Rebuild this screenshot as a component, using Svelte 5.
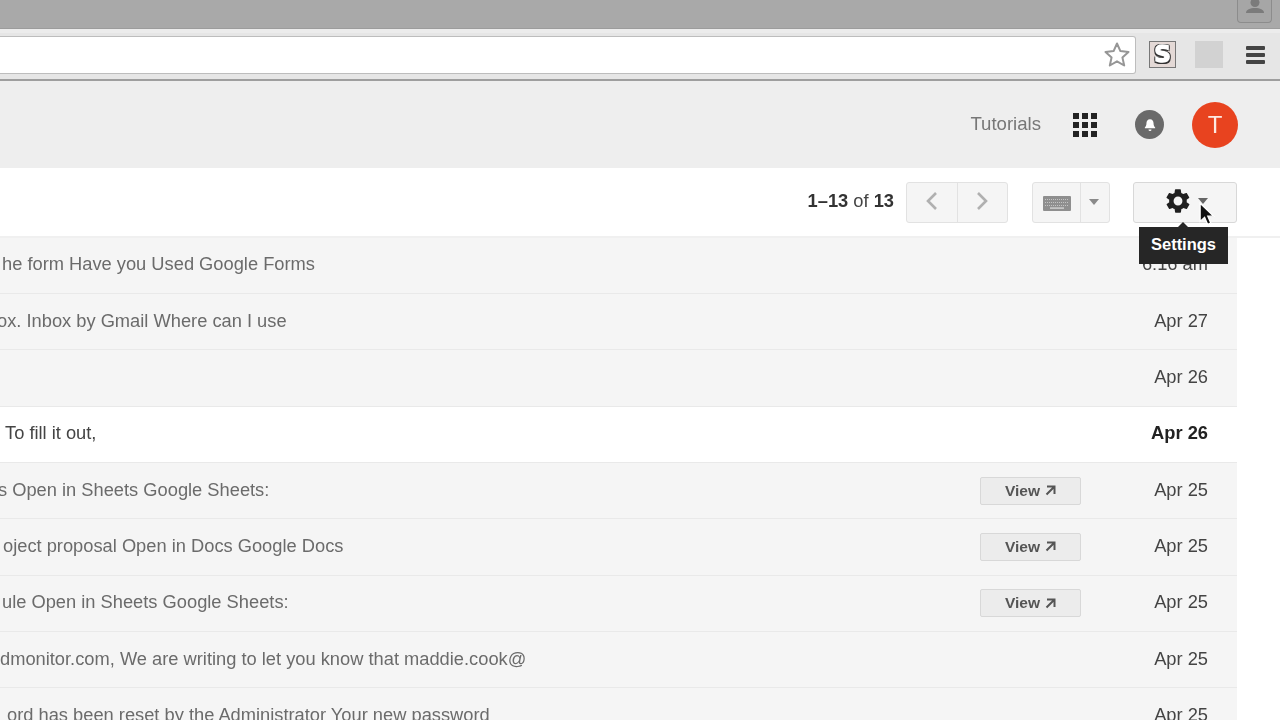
<script>
  const rows = [
    { text: 'he form Have you Used Google Forms', shift: 2, date: '6:16 am' },
    { text: 'ox. Inbox by Gmail Where can I use', shift: -3, date: 'Apr 27' },
    { text: '', shift: 0, date: 'Apr 26' },
    { text: 'To fill it out,', shift: 5, date: 'Apr 26', unread: true },
    { text: 's Open in Sheets Google Sheets:', shift: -2, date: 'Apr 25', view: true },
    { text: 'oject proposal Open in Docs Google Docs', shift: 3, date: 'Apr 25', view: true },
    { text: 'ule Open in Sheets Google Sheets:', shift: 2, date: 'Apr 25', view: true },
    { text: 'dmonitor.com, We are writing to let you know that maddie.cook@', shift: 0, date: 'Apr 25' },
    { text: 'ord has been reset by the Administrator Your new password', shift: 7, date: 'Apr 25' }
  ];
</script>

<div class="page">
  <div class="titlebar">
    <div class="profile">
      <svg width="24" height="18" viewBox="0 0 24 18"><circle cx="12" cy="4.500" r="4.500" fill="#7b7b7b"/><path d="M3 15c0-3.500 4-5 9-5s9 1.500 9 5z" fill="#7b7b7b"/></svg>
    </div>
  </div>

  <div class="toolbar">
    <div class="omnibox">
      <svg class="star" width="28" height="28" viewBox="0 0 28 28"><path d="M14 2.500l3.400 7.600 8.100.8-6.100 5.500 1.800 8.100L14 20.300l-7.200 4.200 1.800-8.100-6.100-5.500 8.100-.8z" fill="#fff" stroke="#969696" stroke-width="2" stroke-linejoin="round"/></svg>
    </div>
    <div class="ext-s"><span>S</span></div>
    <div class="ext-blank"></div>
    <div class="menu"><i></i><i></i><i></i></div>
  </div>

  <header class="gbar">
    <span class="tutorials">Tutorials</span>
    <div class="apps">
      {#each Array(9) as _}<i></i>{/each}
    </div>
    <div class="bell">
      <svg width="16" height="16" viewBox="0 0 18 18"><path d="M9 2.500c-2.600 0-4 2-4 4.500 0 2.500-.8 3.700-1.800 4.800v.9h11.600v-.9C13.800 10.700 13 9.500 13 7c0-2.500-1.400-4.500-4-4.500z" fill="#fff"/><path d="M7.300 14h3.400a1.700 1.700 0 0 1-3.400 0z" fill="#fff"/></svg>
    </div>
    <div class="avatar">T</div>
  </header>

  <div class="actions">
    <span class="count"><b>1–13</b> of <b>13</b></span>
    <div class="btn-group pager">
      <div class="seg">
        <svg width="16" height="22" viewBox="0 0 16 22"><path d="M12 3l-8 8 8 8" fill="none" stroke="#b0b0b0" stroke-width="2.600"/></svg>
      </div>
      <div class="seg">
        <svg width="16" height="22" viewBox="0 0 16 22"><path d="M4 3l8 8-8 8" fill="none" stroke="#b0b0b0" stroke-width="2.600"/></svg>
      </div>
    </div>
    <div class="btn-group keys">
      <div class="seg kb">
        <svg width="28" height="15" viewBox="0 0 28 15"><rect width="28" height="15" rx="1" fill="#8f8f8f"/><path d="M2 3.500h24M2 6.500h24M2 9.500h24" stroke="#c4c4c4" stroke-width="1" stroke-dasharray="1 1"/><rect x="7" y="11.200" width="14" height="1.800" fill="#c4c4c4"/></svg>
      </div>
      <div class="seg caret-seg"><i class="caret"></i></div>
    </div>
    <div class="btn-group settings">
      <svg width="28" height="28" viewBox="0 0 24 24"><path fill="#1f1f1f" fill-rule="evenodd" d="M19.400 13c.1-.3.100-.7.100-1s0-.7-.1-1l2.100-1.600c.2-.2.200-.4.100-.6l-2-3.500c-.1-.2-.4-.3-.6-.2l-2.500 1c-.5-.4-1.100-.7-1.700-1L14.400 2.400c0-.2-.2-.4-.5-.4h-4c-.2 0-.4.200-.5.400L9 5.100c-.6.300-1.200.6-1.700 1l-2.500-1c-.2-.1-.5 0-.6.200l-2 3.500c-.1.200-.1.500.1.600L4.500 11c0 .3-.1.700-.1 1s0 .7.100 1l-2.100 1.600c-.2.200-.2.400-.1.600l2 3.500c.1.200.4.300.6.200l2.500-1c.5.400 1.100.7 1.700 1l.4 2.700c0 .2.200.4.500.4h4c.2 0 .4-.2.500-.4l.4-2.700c.6-.3 1.200-.6 1.700-1l2.500 1c.2.100.5 0 .6-.2l2-3.500c.1-.2.100-.5-.1-.6zM12 15.800a3.800 3.800 0 1 1 0-7.600 3.800 3.800 0 0 1 0 7.600z"/></svg>
      <i class="caret dark"></i>
    </div>
  </div>

  <div class="list">
    {#each rows as row}
      <div class="row" class:unread={row.unread}>
        <span class="snippet" style="margin-left: {row.shift}px">{row.text}</span>
        {#if row.view}
          <div class="view">View
            <svg width="11" height="11" viewBox="0 0 11 11"><path d="M2 1.500h7.500V9M9 2L1.500 9.500" fill="none" stroke="#555" stroke-width="2"/></svg>
          </div>
        {/if}
        <span class="date">{row.date}</span>
      </div>
    {/each}
  </div>

  <div class="tooltip">Settings</div>
  <svg class="cursor" width="17" height="26" viewBox="0 0 16 24"><path d="M2 1v17l4.200-3.800 2.800 6.600 3-1.300-2.800-6.400h5.600z" fill="#111" stroke="#fff" stroke-width="1.200"/></svg>
</div>

<style>
  :global(body) {
    margin: 0;
    background: #fff;
  }
  .page {
    position: relative;
    width: 1280px;
    height: 720px;
    overflow: hidden;
    font-family: "Liberation Sans", Arial, sans-serif;
    color: #222;
    filter: blur(0.45px);
  }

  .titlebar {
    height: 29px;
    background: #a9a9a9;
    border-bottom: 1px solid #9c9c9c;
    display: flex;
    justify-content: flex-end;
    padding-right: 8px;
    box-sizing: border-box;
  }
  .profile {
    width: 35px;
    height: 23px;
    box-sizing: border-box;
    border: 1px solid #8c8c8c;
    border-top: none;
    border-radius: 0 0 4px 4px;
    display: flex;
    justify-content: center;
    background: #a6a6a6;
  }
  .profile svg { margin-top: -2px; }

  .toolbar {
    height: 52px;
    box-sizing: border-box;
    background: #e6e6e6;
    border-top: 4px solid #ececec;
    border-bottom: 2px solid #9e9e9e;
    display: flex;
    align-items: center;
    padding-bottom: 3px;
  }
  .omnibox {
    width: 1136px;
    height: 38px;
    box-sizing: border-box;
    background: #fff;
    border: 1px solid #bdbdbd;
    border-left: none;
    border-radius: 0 3px 3px 0;
    display: flex;
    align-items: center;
    justify-content: flex-end;
    padding-right: 4px;
  }
  .ext-s {
    width: 27px;
    height: 27px;
    box-sizing: border-box;
    margin-left: 13px;
    border: 1px solid #777;
    background: #e4d9d6;
    display: flex;
    align-items: center;
    justify-content: center;
  }
  .ext-s span {
    font-family: "DejaVu Sans", sans-serif;
    font-size: 23px;
    font-weight: 700;
    line-height: 1;
    color: #fff;
    -webkit-text-stroke: 1.500px #fff;
    text-shadow: 1.500px 0 #333, -1.500px 0 #333, 0 1.500px #333, 0 -1.500px #333, 1.500px 1.500px #333, -1.500px -1.500px #333, 1.500px -1.500px #333, -1.500px 1.500px #333;
  }
  .ext-blank {
    width: 28px;
    height: 27px;
    margin-left: 19px;
    background: #d2d2d2;
  }
  .menu {
    width: 19px;
    margin-left: 23px;
    display: flex;
    flex-direction: column;
    gap: 3px;
  }
  .menu i {
    display: block;
    height: 4px;
    border-radius: 1px;
    background: #444;
  }

  .gbar {
    height: 87px;
    box-sizing: border-box;
    background: #eee;
    display: flex;
    align-items: center;
    justify-content: flex-end;
    padding-right: 42px;
  }
  .tutorials {
    font-size: 18.600px;
    color: #777;
    margin-bottom: 2px;
  }
  .apps {
    display: grid;
    grid-template-columns: repeat(3, 6px);
    grid-auto-rows: 6px;
    gap: 3px;
    margin-left: 32px;
  }
  .apps i {
    background: #222;
  }
  .bell {
    width: 29px;
    height: 29px;
    margin-left: 38px;
    border-radius: 50%;
    background: #6a6a6a;
    display: flex;
    align-items: center;
    justify-content: center;
  }
  .avatar {
    width: 46px;
    height: 46px;
    margin-left: 28px;
    border-radius: 50%;
    background: #e8431f;
    color: #fde9e2;
    font-size: 24px;
    display: flex;
    align-items: center;
    justify-content: center;
  }

  .actions {
    height: 69.500px;
    box-sizing: border-box;
    background: #fff;
    border-bottom: 2px solid #f0f0f0;
    display: flex;
    align-items: center;
    justify-content: flex-end;
    padding-right: 43px;
    padding-top: 1px;
  }
  .count {
    font-size: 18.300px;
    color: #444;
    margin-right: 12px;
    margin-bottom: 2px;
  }
  .count b { color: #333; }
  .btn-group {
    height: 41px;
    box-sizing: border-box;
    border: 1px solid #e2e2e2;
    border-radius: 3px;
    background: #f5f5f5;
    display: flex;
  }
  .seg {
    display: flex;
    align-items: center;
    justify-content: center;
  }
  .seg + .seg { border-left: 1px solid #e2e2e2; }
  .pager { width: 102px; }
  .pager .seg {
    flex: 1;
    padding-bottom: 2px;
  }
  .keys {
    width: 78px;
    margin-left: 24px;
  }
  .kb {
    width: 47px;
    padding-top: 2px;
  }
  .caret-seg {
    flex: 1;
    padding-right: 3px;
  }
  .caret {
    display: block;
    width: 0;
    height: 0;
    border: 5px solid transparent;
    border-top: 6px solid #8a8a8a;
    border-bottom: none;
  }
  .caret.dark { border-top-color: #666; margin-left: 6px; }
  .settings {
    width: 104px;
    margin-left: 23px;
    border-color: #d8d8d8;
    align-items: center;
    justify-content: center;
    padding-left: 1px;
    padding-bottom: 2px;
  }

  .list { width: 1237px; }
  .row {
    height: 56.350px;
    box-sizing: border-box;
    padding-bottom: 2px;
    background: #f5f5f5;
    border-bottom: 1px solid #e9e9e9;
    display: flex;
    align-items: center;
    font-size: 18.300px;
    color: #6b6b6b;
    white-space: nowrap;
    overflow: hidden;
  }
  .row.unread { background: #fff; color: #444; }
  .snippet { flex: 1; }
  .view {
    width: 101px;
    height: 28px;
    box-sizing: border-box;
    margin-top: 2px;
    margin-right: 40px;
    border: 1px solid #d8d8d8;
    border-radius: 2px;
    background: #ececec;
    color: #555;
    font-size: 15.500px;
    font-weight: 700;
    display: flex;
    align-items: center;
    justify-content: center;
    gap: 5px;
  }
  .date {
    width: 116px;
    box-sizing: border-box;
    padding-right: 29px;
    text-align: right;
    color: #444;
  }
  .unread .date { font-weight: 700; color: #222; }

  .tooltip {
    position: absolute;
    left: 1139px;
    top: 227px;
    width: 89px;
    height: 37px;
    box-sizing: border-box;
    padding-bottom: 2px;
    background: #262626;
    color: #fff;
    font-size: 16.500px;
    font-weight: 700;
    display: flex;
    align-items: center;
    justify-content: center;
  }
  .tooltip::before {
    content: "";
    position: absolute;
    top: -5px;
    left: 39px;
    border: 5px solid transparent;
    border-bottom-color: #262626;
    border-top: none;
  }
  .cursor {
    position: absolute;
    left: 1198px;
    top: 202px;
  }
</style>
